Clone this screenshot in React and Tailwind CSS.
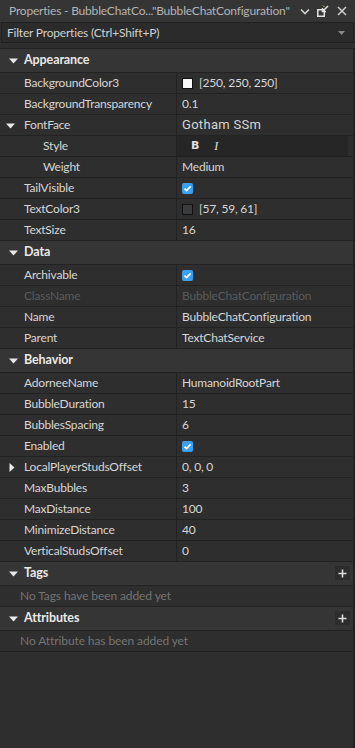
import React from 'react';

const FONT = { fontFamily: 'Lato, "Open Sans", sans-serif' };

function Caret({ open = true }) {
  return open ? (
    <svg width="9" height="6" viewBox="0 0 9 6" className="shrink-0">
      <path d="M0 0.5 H9 L4.5 5.5 Z" fill="#e8e8e8" />
    </svg>
  ) : (
    <svg width="6" height="9" viewBox="0 0 6 9" className="shrink-0">
      <path d="M0.5 0 V9 L5.5 4.5 Z" fill="#e8e8e8" />
    </svg>
  );
}

function Check() {
  return (
    <span className="w-[11px] h-[11px] rounded-[2px] bg-[#3aa0ef] flex items-center justify-center">
      <svg width="9" height="9" viewBox="0 0 9 9">
        <path d="M1.5 4.6 L3.6 6.6 L7.6 2.4" stroke="#ffffff" strokeWidth="1.6" fill="none" />
      </svg>
    </span>
  );
}

function Swatch({ color }) {
  return <span className="w-[11px] h-[11px] border border-[#111] mr-[6px] shrink-0" style={{ background: color }} />;
}

function Header({ title, plus }) {
  return (
    <div className="h-[24px] flex items-center bg-[#353535] border-b border-[#222] relative">
      <span className="w-[24px] flex justify-center pl-[2px]"><Caret /></span>
      <span className="text-[12.5px] font-bold text-[#e9e9e9] tracking-[-0.1px]">{title}</span>
      {plus && (
        <span className="absolute right-[3px] top-[4px] w-[15px] h-[14px] bg-[#2c2c2c] flex items-center justify-center">
          <svg width="9" height="9" viewBox="0 0 9 9">
            <path d="M4.5 0.5 V8.5 M0.5 4.5 H8.5" stroke="#dcdcdc" strokeWidth="1.6" />
          </svg>
        </span>
      )}
    </div>
  );
}

function Row({ name, children, sub, dim, caret }) {
  const tone = dim ? 'text-[#5a5a5a]' : 'text-[#d6d6d6]';
  return (
    <div className="h-[21px] grid grid-cols-[177px_1fr] border-b border-[#222]">
      <div className={`flex items-center border-r border-[#222] ${sub ? 'pl-[43px]' : 'pl-[24px]'} relative`}>
        {caret && <span className="absolute left-[9px] top-[6px]"><Caret open={false} /></span>}
        <span className={`text-[12px] tracking-[-0.2px] ${tone}`}>{name}</span>
      </div>
      <div className={`flex items-center pl-[5px] text-[12px] tracking-[-0.2px] ${tone}`}>{children}</div>
    </div>
  );
}

function Empty({ text }) {
  return (
    <div className="h-[21px] flex items-center pl-[20px] border-b border-[#222] text-[12px] tracking-[-0.1px] text-[#747474]">{text}</div>
  );
}

export default function App() {
  return (
    <div className="w-[355px] h-[748px] bg-[#2e2e2e] flex flex-col overflow-hidden" style={FONT}>
      {/* Title bar */}
      <div className="h-[22px] shrink-0 flex items-center bg-[#353535] pl-[9px] pr-[8px]">
        <span className="text-[12px] text-[#b4b4b4] whitespace-nowrap flex-1 tracking-[-0.2px]">Properties - BubbleChatCo..."BubbleChatConfiguration"</span>
        <svg width="10" height="7" viewBox="0 0 10 7" className="ml-[6px] shrink-0">
          <path d="M1 1.5 L5 5.5 L9 1.5" stroke="#d0d0d0" strokeWidth="1.6" fill="none" />
        </svg>
        <svg width="12" height="12" viewBox="0 0 12 12" className="ml-[7px] shrink-0">
          <rect x="0.75" y="4.75" width="6.5" height="6.5" stroke="#e0e0e0" strokeWidth="1.5" fill="none" />
          <path d="M11 1 L5.5 6.5 M5.5 3 V6.5 H9" stroke="#e0e0e0" strokeWidth="1.5" fill="none" />
          <path d="M6 0.5 L7.5 2" stroke="#e8c14a" strokeWidth="1" />
        </svg>
        <svg width="10" height="10" viewBox="0 0 10 10" className="ml-[8px] shrink-0">
          <path d="M1 1 L9 9 M9 1 L1 9" stroke="#d0d0d0" strokeWidth="1.5" />
        </svg>
      </div>

      {/* Filter */}
      <div className="h-[21px] shrink-0 mx-[1px] border border-[#202020] bg-[#2b2b2b] flex items-center pl-[5px] pr-[8px]">
        <span className="flex-1 text-[12px] tracking-[-0.2px] text-[#d0d0d0]">Filter Properties (Ctrl+Shift+P)</span>
        <svg width="7" height="4" viewBox="0 0 7 4">
          <path d="M0 0 H7 L3.5 4 Z" fill="#8a8a8a" />
        </svg>
      </div>

      {/* Property list */}
      <div className="mt-[5px] flex-1 border-r-2 border-[#222] border-t border-t-[#222]">
        <Header title="Appearance" />
        <Row name="BackgroundColor3"><Swatch color="#fafafa" />[250, 250, 250]</Row>
        <Row name="BackgroundTransparency">0.1</Row>
        <div className="h-[21px] grid grid-cols-[177px_1fr] border-b border-[#222]">
          <div className="flex items-center border-r border-[#222] pl-[24px] relative">
            <span className="absolute left-[6px] top-[8px]"><Caret /></span>
            <span className="text-[12px] tracking-[-0.2px] text-[#d6d6d6]">FontFace</span>
          </div>
          <div className="flex items-center pl-[5px] text-[13px] text-[#d6d6d6] tracking-[0.3px]" style={{ fontFamily: 'Roboto, sans-serif' }}>Gotham SSm</div>
        </div>
        <Row name="Style" sub>
          <div className="-ml-[5px] h-full w-full bg-[#262626] flex items-center">
            <span className="ml-[14px] text-[11px] font-bold text-[#e0e0e0]" style={{ fontFamily: '"DejaVu Sans", sans-serif' }}>B</span>
            <span className="ml-[15px] text-[12px] italic text-[#e0e0e0]" style={{ fontFamily: '"Liberation Serif", serif' }}>I</span>
          </div>
        </Row>
        <Row name="Weight" sub>Medium</Row>
        <Row name="TailVisible"><Check /></Row>
        <Row name="TextColor3"><Swatch color="#393b3d" />[57, 59, 61]</Row>
        <Row name="TextSize">16</Row>

        <Header title="Data" />
        <Row name="Archivable"><Check /></Row>
        <Row name="ClassName" dim>BubbleChatConfiguration</Row>
        <Row name="Name">BubbleChatConfiguration</Row>
        <Row name="Parent">TextChatService</Row>

        <Header title="Behavior" />
        <Row name="AdorneeName">HumanoidRootPart</Row>
        <Row name="BubbleDuration">15</Row>
        <Row name="BubblesSpacing">6</Row>
        <Row name="Enabled"><Check /></Row>
        <Row name="LocalPlayerStudsOffset" caret>0, 0, 0</Row>
        <Row name="MaxBubbles">3</Row>
        <Row name="MaxDistance">100</Row>
        <Row name="MinimizeDistance">40</Row>
        <Row name="VerticalStudsOffset">0</Row>

        <Header title="Tags" plus />
        <Empty text="No Tags have been added yet" />
        <Header title="Attributes" plus />
        <Empty text="No Attribute has been added yet" />
      </div>
    </div>
  );
}
